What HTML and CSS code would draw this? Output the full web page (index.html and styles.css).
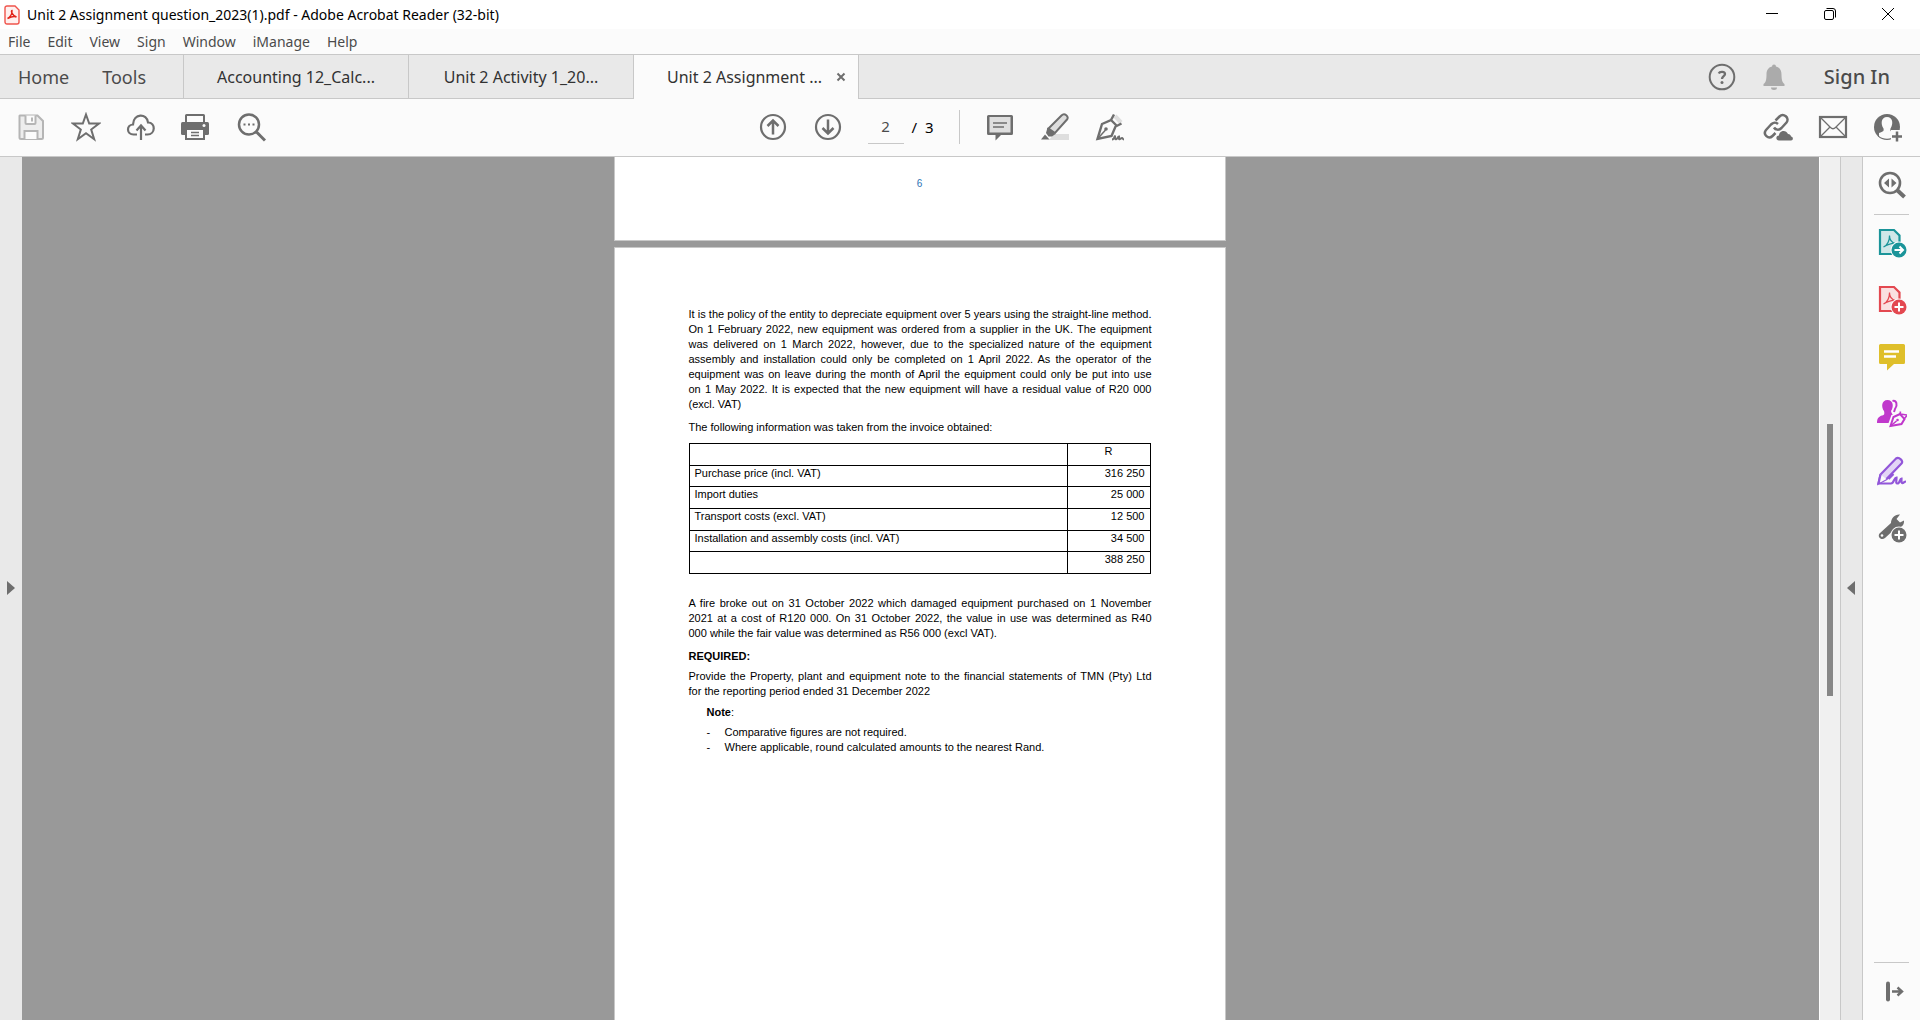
FILE: index.html
```html
<!DOCTYPE html>
<html lang="en">
<head>
    <meta charset="UTF-8">
    <meta name="viewport" content="width=device-width, initial-scale=1.0">
    <title>Unit 2 Assignment question_2023(1).pdf - Adobe Acrobat Reader (32-bit)</title>
    <link rel="stylesheet" href="styles.css">
</head>
<body>
    <header class="title-bar">
        <svg class="app-icon" width="16" height="20" viewBox="0 0 16 20">
            <path d="M3 1h8l4 4v12a2 2 0 0 1-2 2H3a2 2 0 0 1-2-2V3a2 2 0 0 1 2-2z" fill="#fff0ef" stroke="#f0544c" stroke-width="1.4"/>
            <path d="M3.500 13.500C6 12.500 8.500 8.500 8 5.500c-1.500 0 0 5 4.500 6.500-2-1-6 0-9 1.500z" fill="none" stroke="#e1251b" stroke-width="1.400"/>
        </svg>
        <h1 class="window-title">Unit 2 Assignment question_2023(1).pdf - Adobe Acrobat Reader (32-bit)</h1>
        <div class="window-controls">
            <button aria-label="Minimize"><svg width="14" height="14" viewBox="0 0 14 14"><path d="M1 6.500h12"/></svg></button>
            <button aria-label="Restore"><svg width="14" height="14" viewBox="0 0 14 14"><rect x="1.500" y="3.500" width="9" height="9" rx="1.500"/><path d="M3.500 1.500h6.500a2.500 2.500 0 0 1 2.500 2.500v6.500"/></svg></button>
            <button aria-label="Close"><svg width="14" height="14" viewBox="0 0 14 14"><path d="M1 1l12 12M13 1L1 13"/></svg></button>
        </div>
    </header>

    <nav class="menu-bar">
        <button>File</button>
        <button>Edit</button>
        <button>View</button>
        <button>Sign</button>
        <button>Window</button>
        <button>iManage</button>
        <button>Help</button>
    </nav>

    <div class="tab-bar">
        <div class="main-tabs">
            <button>Home</button>
            <button>Tools</button>
        </div>
        <button class="tab">Accounting 12_Calc...</button>
        <button class="tab">Unit 2 Activity 1_20...</button>
        <div class="tab active">
            <button class="tab-label">Unit 2 Assignment ...</button>
            <button class="tab-close" aria-label="Close tab"><svg width="10" height="10" viewBox="0 0 10 10"><path d="M1.500 1.500l7 7M8.500 1.500l-7 7" stroke="#6e6e6e" stroke-width="2"/></svg></button>
        </div>
        <div class="account">
            <button aria-label="Help">
                <svg width="28" height="28" viewBox="0 0 28 28" fill="none" stroke="#6e6e6e" stroke-width="2"><circle cx="14" cy="14" r="12.300"/><path d="M10.800 10.500c.8-2.200 6.200-2.300 6.200.6 0 2.100-3 2.200-3 5" stroke-width="2.300"/><circle cx="14" cy="19.500" r="1.500" fill="#6e6e6e" stroke="none"/></svg>
            </button>
            <button aria-label="Notifications">
                <svg width="24" height="28" viewBox="0 0 24 28" fill="#ababab"><path d="M10 3.500a2 2 0 0 1 4 0c4 1 5.500 4 5.500 8 0 6 1 8 3 9.500v2h-21v-2c2-1.500 3-3.500 3-9.500 0-4 1.500-7 5.500-8zM9 24.500h6a3 2.500 0 0 1-6 0z"/></svg>
            </button>
            <button class="sign-in">Sign In</button>
        </div>
    </div>

    <div class="toolbar">
        <div class="tool-group">
            <button aria-label="Save">
                <svg viewBox="0 0 30 30" fill="none" stroke="#b5b5b5" stroke-width="2"><path d="M4 3.500h17.500l5.500 5.500v16.500a1.500 1.500 0 0 1-1.500 1.500H5a1.500 1.500 0 0 1-1.500-1.500V4z" fill="#ededed"/><path d="M9.500 3.500v7.500a1 1 0 0 0 1 1h8a1 1 0 0 0 1-1V3.500" fill="#fbfbfb"/><path d="M16 5.500v4"/><path d="M8.500 27v-8h13v8" fill="#fbfbfb"/></svg>
            </button>
            <button aria-label="Add to favourites">
                <svg viewBox="0 0 30 30" fill="none" stroke="#6e6e6e" stroke-width="2"><path d="M15 2.500l3.200 9H28l-7.800 6 3 9.700-8.200-5.900-8.200 5.900 3-9.700-7.800-6h9.800z"/></svg>
            </button>
            <button aria-label="Upload to cloud">
                <svg viewBox="0 0 30 30" fill="none" stroke="#6e6e6e" stroke-width="2.200"><path d="M11 22.500H7.500c-7 0-7.500-9.500-.5-10C7.500 1 21 1 22 10.500c8 0 7.500 12-.5 12H19"/><path d="M15 28V14M10.500 18.500L15 13.500l4.500 5"/></svg>
            </button>
            <button aria-label="Print">
                <svg viewBox="1 0 30 30"><path d="M5 11V3.500A1.500 1.500 0 0 1 6.500 2h17A1.500 1.500 0 0 1 25 3.500V11z" fill="#6e6e6e"/><path d="M7 4h16v6H7z" fill="#fbfbfb"/><rect x="1" y="10" width="28" height="13" rx="1.500" fill="#6e6e6e"/><circle cx="24" cy="13.500" r="1.500" fill="#fbfbfb"/><path d="M6 17h18v10H6z" fill="#fbfbfb" stroke="#6e6e6e" stroke-width="2"/><path d="M11 20.500h8M11 23.500h8" stroke="#6e6e6e" stroke-width="1.300"/></svg>
            </button>
            <button aria-label="Find text">
                <svg viewBox="0 0 30 30" fill="none" stroke="#6e6e6e" stroke-width="2.500"><circle cx="13" cy="12.500" r="10"/><path d="M20.500 20l8.500 8.500" stroke-width="3"/><path d="M7.500 12.500h2M12 12.500h2M16.500 12.500h2" stroke-width="2"/></svg>
            </button>
        </div>

        <div class="tool-group page-tools">
            <button aria-label="Previous page">
                <svg viewBox="0 0 30 30" fill="none" stroke="#6e6e6e" stroke-width="2.200"><circle cx="15" cy="15" r="12"/><path d="M15 22.500V9M9.500 14L15 8.500l5.500 5.500" stroke-width="2.500"/></svg>
            </button>
            <button aria-label="Next page">
                <svg viewBox="0 0 30 30" fill="none" stroke="#6e6e6e" stroke-width="2.200"><circle cx="15" cy="15" r="12"/><path d="M15 7.500V21M9.500 16l5.500 5.500 5.500-5.500" stroke-width="2.500"/></svg>
            </button>
            <div class="page-count">
                <input type="text" value="2" aria-label="Page number">
                <span class="page-slash">/</span>
                <span>3</span>
            </div>
            <button aria-label="Add comment">
                <svg viewBox="0 0 30 30"><path d="M3.500 3h23A1.500 1.500 0 0 1 28 4.500v17a1.500 1.500 0 0 1-1.500 1.500H16l-5.500 5.500V23h-7A1.500 1.500 0 0 1 2 21.500v-17A1.500 1.500 0 0 1 3.500 3z" fill="#6e6e6e"/><path d="M4.500 5h21v15.500h-21z" fill="#dedede"/><path d="M8 11h14M8 15h11" stroke="#6e6e6e" stroke-width="1.400"/></svg>
            </button>
            <button aria-label="Highlight text">
                <svg viewBox="0 0 30 30"><path d="M14 22h15v6H9z" fill="#dedede"/><path d="M8.500 16.500L21.500 3.500c3-3 8 1 5.500 4L15 21z" fill="#dedede" stroke="#6e6e6e" stroke-width="2"/><path d="M7.500 15.500l8 6.500-3.500 2.500H8.500L6 21z" fill="#6e6e6e"/><path d="M5 22.500l4.500 5H1z" fill="#6e6e6e"/></svg>
            </button>
            <button aria-label="Sign document">
                <svg viewBox="0 0 30 30" fill="none" stroke="#6e6e6e" stroke-width="2.400"><path d="M18.500 5.500l3-3 6 6.500-3 3z" fill="#dedede" stroke="none"/><path d="M19 2.500l-3 5.500-9 4L2.500 27l14-3 4-9.500 6-3M16 8l6.500 6.500"/><path d="M2.500 27l8-9" stroke-width="1.500"/><circle cx="11" cy="17" r="1.800" fill="#6e6e6e" stroke="none"/><path d="M17 27.500c2 0 2.500-2 3-4 0 3 0 4 1.500 3.500 1.500-.5 1-2.500 2.500-2.500 0 2-.5 3 1 2.500s1-1 2-1 .5 1.500 2 1.500" stroke-width="2"/></svg>
            </button>
        </div>

        <div class="tool-group share-tools">
            <button aria-label="Share link">
                <svg viewBox="0 0 30 30" fill="none" stroke="#6e6e6e" stroke-width="2.500"><path d="M12.500 8.500l4-4c4-4 10.500 1.500 7 6l-5 5.500c-2.500 2.500-6 2-7.500-.5"/><path d="M15 12c-2-2-5-1.500-7 .5l-5 5.500c-3.500 4.500 2.500 10 6.500 6l3-3"/><path d="M16 28.500c-3.500 0-3.500-5 0-5 0-5 7-6.500 9-1.500 2 0 3 1.500 3 2.500 2.500 0 2.500 4 0 4z" fill="#6e6e6e" stroke="none"/></svg>
            </button>
            <button aria-label="Send by email">
                <svg viewBox="0 0 30 30" fill="none" stroke="#6e6e6e" stroke-width="2.200"><rect x="2" y="5" width="26" height="20"/><path d="M3 6l9.500 9.500c1.500 1.500 3.500 1.500 5 0L27 6M3 24l9-9M27 24l-9-9" stroke-width="1.300"/></svg>
            </button>
            <button aria-label="Add people">
                <svg viewBox="0 0 30 30"><circle cx="14" cy="15" r="13" fill="#6e6e6e"/><path d="M14 5c6 0 6.500 7 3.500 11.500-.5 2.500 0 3 4.500 4.500v3c-4 3.500-12 3.500-16 0v-3c4.500-1.500 5-2 4.500-4.500C7.500 12 8 5 14 5z" fill="#fbfbfb"/><path d="M18 18h12v12H18z" fill="#fbfbfb"/><path d="M24 19.500v10M19 24.500h10" stroke="#6e6e6e" stroke-width="2.500"/></svg>
            </button>
        </div>
    </div>

    <main class="workspace">
        <button class="panel-toggle left" aria-label="Show navigation pane"><svg width="8" height="14" viewBox="0 0 8 14"><path d="M0 0l8 7-8 7z" fill="#6e6e6e"/></svg></button>

        <div class="document-view">
            <section class="page page-previous">
                <span class="page-number">6</span>
            </section>
            <section class="page page-current">
                <p class="text">
                    <span class="line">It is the policy of the entity to depreciate equipment over 5 years using the straight-line method.</span>
                    <span class="line">On 1 February 2022, new equipment was ordered from a supplier in the UK. The equipment</span>
                    <span class="line">was delivered on 1 March 2022, however, due to the specialized nature of the equipment</span>
                    <span class="line">assembly and installation could only be completed on 1 April 2022. As the operator of the</span>
                    <span class="line">equipment was on leave during the month of April the equipment could only be put into use</span>
                    <span class="line">on 1 May 2022. It is expected that the new equipment will have a residual value of R20 000</span>
                    (excl. VAT)
                </p>
                <p class="text">The following information was taken from the invoice obtained:</p>
                <table class="invoice">
                    <thead>
                        <tr><th></th><th>R</th></tr>
                    </thead>
                    <tbody>
                        <tr><td>Purchase price (incl. VAT)</td><td>316 250</td></tr>
                        <tr><td>Import duties</td><td>25 000</td></tr>
                        <tr><td>Transport costs (excl. VAT)</td><td>12 500</td></tr>
                        <tr><td>Installation and assembly costs (incl. VAT)</td><td>34 500</td></tr>
                        <tr><td></td><td>388 250</td></tr>
                    </tbody>
                </table>
                <p class="text">
                    <span class="line">A fire broke out on 31 October 2022 which damaged equipment purchased on 1 November</span>
                    <span class="line">2021 at a cost of R120 000. On 31 October 2022, the value in use was determined as R40</span>
                    000 while the fair value was determined as R56 000 (excl VAT).
                </p>
                <h2 class="required">REQUIRED:</h2>
                <p class="text question">
                    <span class="line">Provide the Property, plant and equipment note to the financial statements of TMN (Pty) Ltd</span>
                    for the reporting period ended 31 December 2022
                </p>
                <p class="note"><b>Note</b>:</p>
                <ul class="note-list">
                    <li>Comparative figures are not required.</li>
                    <li>Where applicable, round calculated amounts to the nearest Rand.</li>
                </ul>
            </section>
        </div>

        <div class="scrollbar"><div class="scroll-thumb"></div></div>

        <button class="panel-toggle right" aria-label="Hide tools pane"><svg width="8" height="14" viewBox="0 0 8 14"><path d="M8 0L0 7l8 7z" fill="#6e6e6e"/></svg></button>

        <aside class="tools-pane">
            <button class="pane-search" aria-label="Search tools">
                <svg viewBox="0 0 30 30" fill="none" stroke="#6e6e6e"><circle cx="13" cy="13" r="10" stroke-width="2.600"/><path d="M20 20l7.500 7" stroke-width="4"/><path d="M12 8.500v9L7 13zM14.500 8.500v9l5-4.500z" fill="#6e6e6e" stroke="none"/></svg>
            </button>
            <div class="pane-tools">
                <button aria-label="Export PDF">
                    <svg viewBox="0 0 30 30"><path d="M3 2h14l5.500 5.500V26H3z" fill="#cfe7e8" stroke="#1a9499" stroke-width="2.200"/><path d="M6.500 19c4-2 6-7 6-11.500 0 4 2 7 6 8-4-.5-8 1-12 3.500z" fill="none" stroke="#1a9499" stroke-width="1.200"/><circle cx="22" cy="22" r="8.500" fill="#fbfbfb"/><circle cx="22" cy="22" r="7.500" fill="#1a9499"/><path d="M17.500 22h8M22.500 18.500L26 22l-3.500 3.500" fill="none" stroke="#fff" stroke-width="2"/></svg>
                </button>
                <button aria-label="Create PDF">
                    <svg viewBox="0 0 30 30"><path d="M3 2h14l5.500 5.500V26H3z" fill="#fadfe0" stroke="#e34850" stroke-width="2.200"/><path d="M6.500 19c4-2 6-7 6-11.500 0 4 2 7 6 8-4-.5-8 1-12 3.500z" fill="none" stroke="#e34850" stroke-width="1.200"/><circle cx="22" cy="22" r="8.500" fill="#fbfbfb"/><circle cx="22" cy="22" r="7.500" fill="#e34850"/><path d="M17.500 22h9M22 17.500v9" fill="none" stroke="#fff" stroke-width="2"/></svg>
                </button>
                <button aria-label="Comment">
                    <svg viewBox="0 0 30 30"><path d="M3.500 2h23A1.500 1.500 0 0 1 28 3.500v17a1.500 1.500 0 0 1-1.500 1.500H17l-7 6.500V22H3.500A1.500 1.500 0 0 1 2 20.500v-17A1.500 1.500 0 0 1 3.500 2z" fill="#dfbf2a"/><path d="M7 9.500h15M7 14.500h12" stroke="#fff" stroke-width="2.400"/></svg>
                </button>
                <button aria-label="Fill and sign">
                    <svg viewBox="0 0 30 30"><path d="M10.500 1c6 0 6.500 7 3.500 11 .5 3 2 3.500 3 4l-4 8H0c0-6 3-7 6.500-8 1-.5 1-2.500.5-4C4 8 4.500 1 10.500 1z" fill="#c038cc"/><path d="M15.500 2c4-1 5.500 4 2.500 8l-1 3" fill="none" stroke="#c038cc" stroke-width="2"/><path d="M12.500 27.500l3.500-10 7-3 5 5.500-3 6z" fill="#fbfbfb" stroke="#fbfbfb" stroke-width="4"/><path d="M13.500 27l3-9 6.500-3 4.500 5-3 5z" fill="#fbfbfb" stroke="#c038cc" stroke-width="2"/><path d="M13.500 27l6-5M23.500 12.500l-.5 3M27 20l3-3.500M23 15l7 1" fill="none" stroke="#c038cc" stroke-width="1.600"/><circle cx="20.500" cy="21" r="1.300" fill="#c038cc"/></svg>
                </button>
                <button aria-label="Certificates">
                    <svg viewBox="0 0 30 30" fill="none" stroke="#9256d9" stroke-width="2.200"><path d="M1.500 27.500l2-9L19 2.500c3-2 8 2.500 5.500 5L9.500 23z" fill="#e3d5f6"/><path d="M3.500 18.500l6 4.500-8 4.500z" fill="#fbfbfb" stroke="none"/><path d="M3.500 18.500l-2 9H14c3 0 3-6 5.500-6 0 4-1 6 1 6 2.500 0 2-5 4-5 0 3-.5 5 1.500 4.500 1-.5 1.500-1.500 3-1.500M11.500 23l5-5"/></svg>
                </button>
                <button aria-label="More tools">
                    <svg viewBox="0 0 30 30"><path d="M23 1.500l-3.500 4.500 3.500 3.500 4-2c.5 5-3.500 8-7.500 7L8 25c-3.500 3-8-1-5.500-4.500L14 10c0-5 4-9 9-8.500z" fill="#6e6e6e"/><circle cx="5" cy="22.500" r="1.300" fill="#fbfbfb"/><circle cx="22" cy="22" r="8.500" fill="#fbfbfb"/><circle cx="22" cy="22" r="7.500" fill="#6e6e6e"/><path d="M17.500 22h9M22 17.500v9" stroke="#fff" stroke-width="2"/></svg>
                </button>
            </div>
            <button class="pane-collapse" aria-label="Collapse pane">
                <svg viewBox="0 0 30 30" fill="none" stroke="#6e6e6e"><path d="M11 6.500v16" stroke-width="4" stroke-linecap="round"/><path d="M15 14.500h9M20.500 10.500l4.500 4-4.500 4" stroke-width="2.400"/></svg>
            </button>
        </aside>
    </main>
</body>
</html>
```
FILE: styles.css
```css
* {
    margin: 0;
    padding: 0;
    box-sizing: border-box;
}
body {
    display: flex;
    flex-direction: column;
    height: 100vh;
    overflow: hidden;
    background-color: #fbfbfb;
    color: #4b4b4b;
    font-family: 'Noto Sans', 'Open Sans', sans-serif;
}
button {
    display: flex;
    align-items: center;
    justify-content: center;
    border: none;
    background: none;
    color: inherit;
    font: inherit;
}

/* Title bar */
.title-bar {
    display: flex;
    align-items: center;
    height: 29px;
    padding-left: 4px;
    background-color: #fff;
}
.window-title {
    margin-left: 7px;
    font-size: 14px;
    font-weight: 400;
    color: #000;
}
.window-controls {
    display: flex;
    margin-left: auto;
    padding-right: 3px;
}
.window-controls button {
    width: 58px;
    height: 29px;
    padding-bottom: 2px;
}
.window-controls svg {
    fill: none;
    stroke: #000;
}

/* Menu */
.menu-bar {
    display: flex;
    gap: 17px;
    height: 25px;
    padding: 0 8px;
    font-size: 14px;
}

/* Tabs */
.tab-bar {
    display: flex;
    height: 45px;
    background-color: #e9e9e9;
    border-top: 1px solid #c8c8c8;
    border-bottom: 1px solid #c8c8c8;
}
.main-tabs {
    display: flex;
    gap: 33px;
    width: 183px;
    padding-left: 18px;
    font-size: 18px;
}
.tab {
    width: 225px;
    border-left: 1px solid #c8c8c8;
    font-size: 16px;
    color: #323232;
}
.tab.active {
    display: flex;
    align-items: center;
    gap: 14px;
    width: 226px;
    margin-bottom: -1px;
    padding-left: 33px;
    border-right: 1px solid #c8c8c8;
    background-color: #fbfbfb;
}
.account {
    display: flex;
    align-items: center;
    gap: 26px;
    margin-left: auto;
    padding-right: 30px;
}
.sign-in {
    margin-left: 12px;
    font-size: 20px;
    font-weight: 500;
}

/* Toolbar */
.toolbar {
    display: grid;
    grid-template-columns: 1fr auto 1fr;
    align-items: center;
    height: 58px;
    padding: 0 17px 2px 16px;
    border-bottom: 1px solid #c8c8c8;
}
.tool-group {
    display: flex;
    align-items: center;
    gap: 25px;
}
.tool-group button {
    width: 30px;
    height: 30px;
}
.tool-group svg {
    width: 30px;
    height: 30px;
}
.page-tools {
    padding-right: 37px;
}
.page-count {
    display: flex;
    align-items: center;
    width: 92px;
    height: 34px;
    border-right: 1px solid #c8c8c8;
    font-size: 15px;
    color: #000;
}
.page-count input {
    width: 36px;
    height: 34px;
    border: none;
    border-bottom: 1px solid #c8c8c8;
    background: none;
    color: #4b4b4b;
    font: inherit;
    text-align: center;
}
.page-slash {
    padding: 0 8px;
}
.share-tools {
    justify-content: flex-end;
}

/* Workspace */
.workspace {
    display: flex;
    flex: 1;
    min-height: 0;
}
.panel-toggle {
    width: 22px;
    padding-bottom: 2px;
    background-color: #e9e9e9;
}
.panel-toggle.right {
    width: 23px;
    padding-right: 2px;
    border-left: 1px solid #c8c8c8;
    border-right: 1px solid #c8c8c8;
}
.document-view {
    display: flex;
    flex-direction: column;
    align-items: center;
    flex: 1;
    gap: 6px;
    padding-right: 2px;
    overflow: hidden;
    background-color: #999;
    border-right: 1px solid #fff;
}
.page {
    flex-shrink: 0;
    width: 612px;
    border: 1px solid #c8c8c8;
    background-color: #fff;
    color: #000;
    font-family: 'Liberation Sans', Arial, sans-serif;
    font-size: 11px;
    line-height: 15px;
}
.page-previous {
    height: 84px;
    padding-top: 19px;
    border-top: none;
    text-align: center;
}
.page-number {
    color: #2e74b5;
    font-size: 10px;
}
.page-current {
    min-height: 866px;
    padding: 59px 73px 60px 74px;
}
.text {
    margin-bottom: 8px;
}
.line {
    display: block;
    text-align-last: justify;
}
.invoice {
    width: 462px;
    margin-bottom: 22px;
    border-collapse: collapse;
}
.invoice tr {
    height: 22px;
}
.invoice tbody tr:nth-child(3n + 1) {
    height: 21px;
}
.invoice th, .invoice td {
    padding: 0 5px;
    border: 1px solid #000;
    font-weight: 400;
    vertical-align: top;
}
.invoice th:last-child {
    width: 83px;
}
.invoice td:last-child {
    text-align: right;
}
.required {
    margin-bottom: 5px;
    font-size: 11px;
}
.question {
    margin-bottom: 6px;
}
.note {
    margin-bottom: 5px;
    padding-left: 18px;
}
.note-list {
    padding-left: 36px;
    list-style: none;
}
.note-list li::before {
    content: '-';
    display: inline-block;
    width: 18px;
    margin-left: -18px;
}
.scrollbar {
    width: 20px;
    padding: 267px 7px 0;
    background-color: #f0f0f0;
}
.scroll-thumb {
    height: 272px;
    background-color: #868686;
}

/* Tools pane */
.tools-pane {
    display: flex;
    flex-direction: column;
    align-items: center;
    width: 57px;
}
.tools-pane button {
    width: 35px;
}
.tools-pane svg {
    width: 30px;
    height: 30px;
}
.pane-search {
    height: 58px;
    padding-bottom: 2px;
    border-bottom: 1px solid #c8c8c8;
}
.pane-tools {
    display: flex;
    flex-direction: column;
    gap: 27px;
    padding-top: 13px;
}
.pane-collapse {
    height: 58px;
    margin-top: auto;
    border-top: 1px solid #c8c8c8;
}
```
